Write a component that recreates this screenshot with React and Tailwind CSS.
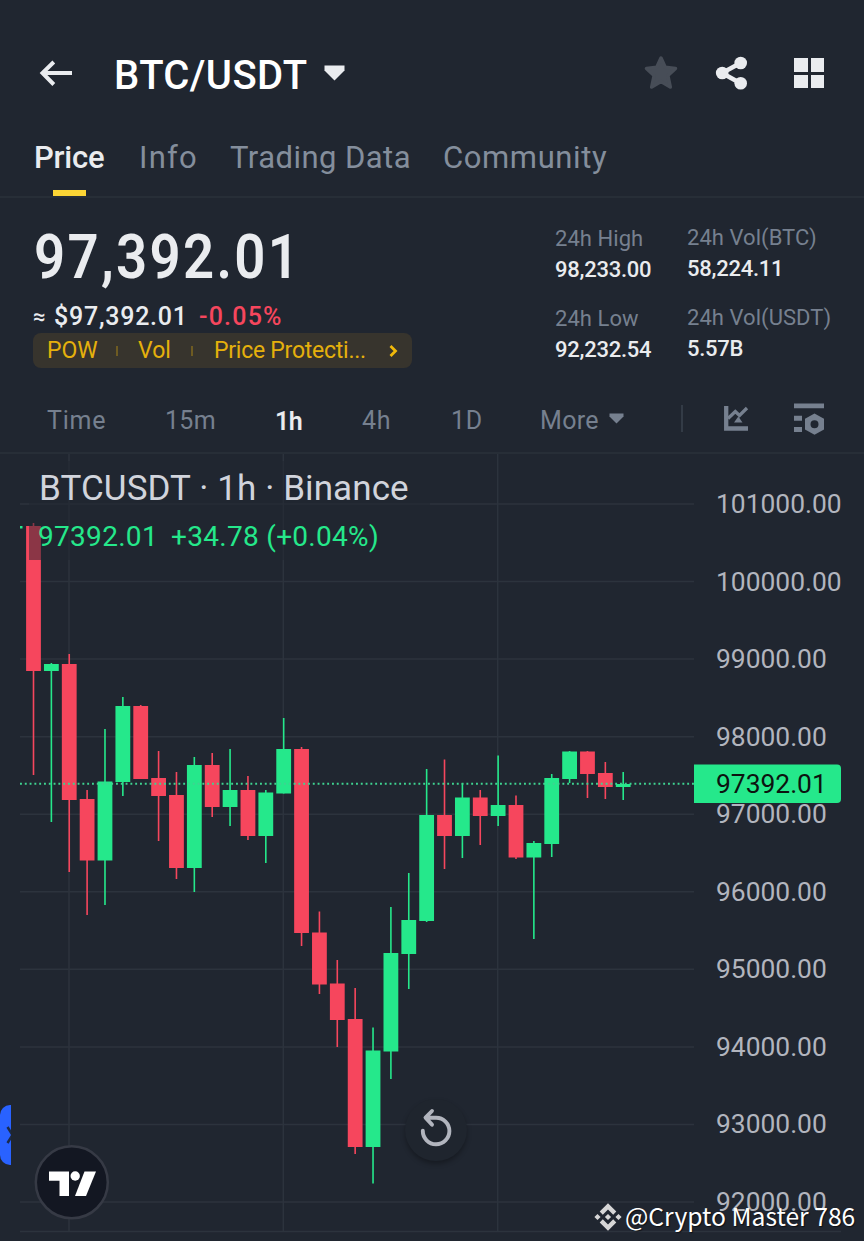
const GREEN = "#25e88b";
const RED = "#f6465d";

// direction, high, body top, body bottom, low (chart y coordinates)
const candles = [
  ["r", 523, 526, 671, 775],
  ["g", 663, 664, 671, 822],
  ["r", 654, 664, 800, 872],
  ["r", 790, 799, 860.5, 915],
  ["g", 729, 781.5, 860.5, 905],
  ["g", 697, 706, 782, 796],
  ["r", 705, 706, 779, 779],
  ["r", 751, 778, 796, 841],
  ["r", 772, 795, 868, 879],
  ["g", 757, 765, 868, 892],
  ["r", 753, 765, 807, 817],
  ["g", 749, 790, 807, 826],
  ["r", 776, 790, 836, 840],
  ["g", 790, 792.5, 836, 863],
  ["g", 718, 749, 793.5, 793.5],
  ["r", 747, 749, 933, 946],
  ["r", 911.5, 932.5, 984.5, 994],
  ["r", 960, 983.5, 1020, 1047],
  ["r", 988, 1019, 1147, 1154],
  ["g", 1027.5, 1050.5, 1147, 1183.5],
  ["g", 907, 953, 1051.5, 1079],
  ["g", 873, 920, 954, 989],
  ["g", 769, 815, 921, 922],
  ["r", 759.5, 815, 836, 869],
  ["g", 783, 797.5, 836, 858],
  ["r", 790, 797.5, 816, 845],
  ["g", 755.5, 805, 816, 826],
  ["r", 795.5, 805, 857.5, 859],
  ["g", 841, 843, 857.5, 939],
  ["g", 774, 778, 844, 857],
  ["g", 751, 751.5, 779, 783],
  ["r", 751, 751.5, 774, 798],
  ["r", 762, 773, 787, 799],
  ["g", 772, 784, 787, 800],
];

const levels = [101, 100, 99, 98, 97, 96, 95, 94, 93, 92];

function Header() {
  return (
    <header className="flex h-[109px] items-center pt-[37px] pl-[38px]">
      <svg className="h-[30px] w-[36px]" viewBox="38 58 36 30" fill="none" stroke="#eaecef" strokeWidth="4">
        <path d="M72 73H42.500M53.800 62L42.500 73L53.800 84.500" />
      </svg>
      <h1 className="ml-[40px] w-[210px] text-[40px] leading-[48px] font-medium tracking-[0.400px] whitespace-nowrap text-white mt-[5px]">
        BTC/USDT
      </h1>
      <svg className="h-[16px] w-[21px]" viewBox="0 0 21 16" fill="#eaecef">
        <path d="M0.500 0.500H20.500V5.500L10.500 15.500L0.500 5.500Z" />
      </svg>
      <svg className="ml-[299px] h-[36px] w-[34px]" viewBox="0 0 34 36">
        <path
          d="M17 3L21.200 12.300L31.500 13.400L23.900 20.600L26.300 32L17 26.500L7.700 32L10.100 20.600L2.500 13.400L12.800 12.300Z"
          fill="#474d57"
          stroke="#474d57"
          strokeWidth="3.500"
          strokeLinejoin="round"
        />
      </svg>
      <svg className="ml-[37px] h-[36px] w-[34px]" viewBox="715 55 34 36" fill="#eaecef" stroke="#eaecef">
        <path d="M740.500 63L722 73L740.500 83.300" fill="none" strokeWidth="4.500" />
        <g stroke="none">
          <circle cx="722.200" cy="73" r="6.300" />
          <circle cx="740.700" cy="63" r="6.300" />
          <circle cx="740.700" cy="83.300" r="6.300" />
        </g>
      </svg>
      <div className="ml-[45px] grid grid-cols-2 gap-[3px]">
        <i className="h-[13.500px] w-[13.500px] bg-[#eaecef]" />
        <i className="h-[13.500px] w-[13.500px] bg-[#eaecef]" />
        <i className="h-[13.500px] w-[13.500px] bg-[#eaecef]" />
        <i className="h-[13.500px] w-[13.500px] bg-[#eaecef]" />
      </div>
    </header>
  );
}

function Tabs() {
  return (
    <nav className="flex h-[89px] border-b-2 border-[#272e37] pt-[29px] pl-[34px] text-[31px] leading-[40px] whitespace-nowrap text-[#848e9c]">
      <div className="flex w-[105px] flex-col font-medium text-[#eaecef]">
        <span className="tracking-[-0.200px]">Price</span>
        <i className="mt-[12px] ml-[19px] h-[6px] w-[33px] bg-[#fcd535]" />
      </div>
      <span className="w-[91px] tracking-[1.200px]">Info</span>
      <span className="w-[213px] tracking-[0.450px]">Trading Data</span>
      <span className="tracking-[0.600px]">Community</span>
    </nav>
  );
}

function Stat({ label, value }) {
  return (
    <div className="text-[22px] leading-[31px] whitespace-nowrap">
      <div className="tracking-[0.050px] text-[#76808f]">{label}</div>
      <div className="font-medium tracking-[-0.250px] text-[#eaecef]">{value}</div>
    </div>
  );
}

function Summary() {
  return (
    <section className="flex h-[172px]">
      <div className="w-[555px] pt-[27px] pl-[33px]">
        <div className="ml-px h-[64px] origin-left scale-x-[0.88] text-[62px] leading-[64px] font-semibold tracking-[2.600px] text-[#eaecef]">
          97,392.01
        </div>
        <div className="mt-[13px] flex h-[30px] text-[25px] leading-[30px] font-medium whitespace-nowrap">
          <span className="w-[21px] text-[22px] text-[#eaecef]">≈</span>
          <span className="w-[145px] tracking-[0.750px] text-[#eaecef]">$97,392.01</span>
          <span className="tracking-[1.200px] text-[#f6465d]">-0.05%</span>
        </div>
        <div className="mt-px flex h-[35px] w-[379px] items-center rounded-[8px] bg-[#37342d] pl-[14px] text-[23px] whitespace-nowrap text-[#e5b00c]">
          <span className="w-[69px] pt-[2px]">POW</span>
          <i className="h-[10px] w-[2px] bg-[#6e5b22]" />
          <span className="ml-[20px] w-[53px] pt-[2px]">Vol</span>
          <i className="h-[10px] w-[2px] bg-[#6e5b22]" />
          <span className="ml-[21px] w-[175px] pt-[2px] tracking-[-0.250px]">Price Protecti...</span>
          <svg className="h-[12px] w-[9px]" viewBox="0 0 9 12" fill="none" stroke="#f0b90b" strokeWidth="2.800">
            <path d="M1.500 1L6.500 6L1.500 11" />
          </svg>
        </div>
      </div>
      <div className="flex w-[132px] flex-col gap-[18px] pt-[25px]">
        <Stat label="24h High" value="98,233.00" />
        <Stat label="24h Low" value="92,232.54" />
      </div>
      <div className="flex flex-col gap-[18px] pt-[24px]">
        <Stat label="24h Vol(BTC)" value="58,224.11" />
        <Stat label="24h Vol(USDT)" value="5.57B" />
      </div>
    </section>
  );
}

function Intervals() {
  return (
    <div className="flex h-[84px] items-center border-b-2 border-[#272e37] pt-[19px] pl-[47px] text-[25px] leading-[36px] tracking-[0.800px] whitespace-nowrap text-[#76808f]">
      <span className="w-[118px] pt-px">Time</span>
      <span className="w-[110px] pt-px tracking-[0.300px]">15m</span>
      <span className="w-[87px] pt-[2px] font-semibold tracking-[-0.500px] text-[#eaecef]">1h</span>
      <span className="w-[89px] pt-px">4h</span>
      <span className="w-[89px] pt-px">1D</span>
      <span className="w-[69px] pt-px tracking-[0.3px]">More</span>
      <svg className="mb-[5px] h-[11px] w-[15px]" viewBox="0 0 15 11" fill="#76808f">
        <path d="M0.500 0.500H14.500V3.500L7.500 10.500L0.500 3.500Z" />
      </svg>
      <i className="mb-[4px] ml-[57px] h-[27px] w-[2px] bg-[#333b46]" />
      <svg className="mb-[5px] ml-[39px] h-[28px] w-[28px]" viewBox="722 404 28 28" fill="none" stroke="#76808f">
        <path d="M726.200 406V428.500H748" strokeWidth="4.300" />
        <path d="M728 418.500L735.300 411.500L739.500 415.500L747 408" strokeWidth="3.300" />
        <path d="M738.300 416.500L742.500 422.500H734Z" fill="#76808f" stroke="none" />
      </svg>
      <svg className="mb-[3px] ml-[43px] h-[32px] w-[32px]" viewBox="793 403.500 32 32" fill="#76808f">
        <path d="M794 404H824V408.800H794ZM794 416.300H802V421.300H794ZM794 427.500H802V432.500H794Z" />
        <path
          fillRule="evenodd"
          d="M814.500 414L824 419.300V430L814.500 435.300L805 430V419.300ZM814.500 420.700A4 4 0 1 0 814.500 428.700A4 4 0 1 0 814.500 420.700Z"
        />
      </svg>
    </div>
  );
}

function Chart() {
  return (
    <section className="relative h-[787px] overflow-hidden">
      <svg className="block h-[787px] w-[864px]" viewBox="0 454 864 787" fontFamily="Roboto, sans-serif">
        <g stroke="#2c333d" strokeWidth="1.500">
          {levels.map((l, i) => (
            <line key={l} x1="20" x2="694" y1={504 + i * 77.56} y2={504 + i * 77.56} />
          ))}
          <line x1="20" x2="841" y1="1231.500" y2="1231.500" />
          {[69, 283.3, 497.7].map((x) => (
            <line key={x} x1={x} x2={x} y1="454" y2="1231" />
          ))}
        </g>
        {candles.map(([dir, high, top, bottom, low], i) => {
          const x = 33.5 + i * 17.87;
          const color = dir === "g" ? GREEN : RED;
          return (
            <g key={i} fill={color}>
              <rect x={x - 0.8} y={high} width="1.600" height={low - high} />
              <rect x={x - 7.4} y={top} width="14.800" height={bottom - top} />
            </g>
          );
        })}
        <line x1="20" x2="694" y1="783.700" y2="783.700" stroke="#3fd391" strokeWidth="1.900" strokeDasharray="1.900 2.900" />
        <rect x="20" y="526" width="2.500" height="2.500" fill={GREEN} />
        <g fill="#202630" fillOpacity="0.500">
          <rect x="29" y="461" width="401" height="51" />
          <rect x="29" y="512" width="363" height="48" />
        </g>
        <g fill="#b2b5be" fontSize="26.400">
          {levels.map((l, i) => (
            <text key={l} x="716" y={513 + i * 77.56}>{`${l}000.00`}</text>
          ))}
        </g>
        <path d="M694 764.500H837A4 4 0 0 1 841 768.500V799A4 4 0 0 1 837 803H694Z" fill={GREEN} />
        <text x="716" y="793.300" fontSize="26.400" fill="#0c1410">97392.01</text>
      </svg>

      <div className="absolute top-[11px] left-[39px] text-[35px] leading-[48px] tracking-[0.100px] whitespace-nowrap text-[#d1d4dc]">
        BTCUSDT · 1h · Binance
      </div>
      <div className="absolute top-[66px] left-[38px] flex text-[28px] leading-[34px] tracking-[0.300px] whitespace-nowrap text-[#25e88b]">
        <span className="w-[133px]">97392.01</span>
        <span>+34.78 (+0.04%)</span>
      </div>

      <div className="absolute top-[651px] left-0 h-[60px] w-[11px] overflow-hidden rounded-l-[10px] bg-[#2962ff]">
        <svg className="h-[60px] w-[11px]" viewBox="0 1105 11 60" fill="none" stroke="#1b2a4a" strokeWidth="2.500">
          <path d="M7.500 1127L12.500 1135L7.500 1143" />
        </svg>
      </div>

      <svg className="absolute top-[690px] left-[34px] h-[76px] w-[76px]" viewBox="34 1144 76 76">
        <circle cx="71.800" cy="1182.300" r="36" fill="#131722" stroke="#363a45" strokeWidth="2.500" />
        <g fill="#fff">
          <path d="M49 1171.500H69V1196H59.500V1180.700H49Z" />
          <circle cx="75.200" cy="1176" r="4.700" />
          <path d="M84.500 1171.500H96L86 1196H75Z" />
        </g>
      </svg>

      <div className="absolute top-[645px] left-[405px] h-[62px] w-[62px] rounded-full bg-[#1f252e] shadow-[0_3px_5px_rgba(0,0,0,0.300)]">
        <svg
          className="h-[62px] w-[62px]"
          viewBox="405 1099 62 62"
          fill="none"
          stroke="#b2b5be"
          strokeWidth="3.900"
          strokeLinecap="round"
          strokeLinejoin="round"
        >
          <path d="M422.800 1130.800A13.300 13.300 0 1 0 436 1117.700H426M432 1111L425.500 1117.700L432 1124.700" />
        </svg>
      </div>

      <div className="absolute top-[745px] left-[594px] flex items-center whitespace-nowrap text-white">
        <svg className="h-[28px] w-[28px]" viewBox="0 0 28 28" fill="#d6d6d6">
          <path d="M14 0.300L22.300 8.600L19.200 11.700L14 6.500L8.800 11.700L5.700 8.600Z" />
          <path d="M14 27.700L22.300 19.400L19.200 16.300L14 21.500L8.800 16.300L5.700 19.400Z" />
          <path d="M3.500 10.900L6.600 14L3.500 17.100L0.400 14ZM24.500 10.900L27.600 14L24.500 17.100L21.400 14ZM14 10.900L17.100 14L14 17.100L10.900 14Z" />
        </svg>
        <span className="ml-[3px] h-[36px] font-['Noto_Sans_CJK_SC',sans-serif] text-[24.700px] leading-[33px] [text-shadow:1px_1px_1px_rgba(0,0,0,0.600)]">
          @Crypto Master 786
        </span>
      </div>
    </section>
  );
}

export default function App() {
  return (
    <main className="h-[1241px] w-[864px] overflow-hidden bg-[#202630] font-[Roboto,sans-serif]">
      <Header />
      <Tabs />
      <Summary />
      <Intervals />
      <Chart />
    </main>
  );
}
